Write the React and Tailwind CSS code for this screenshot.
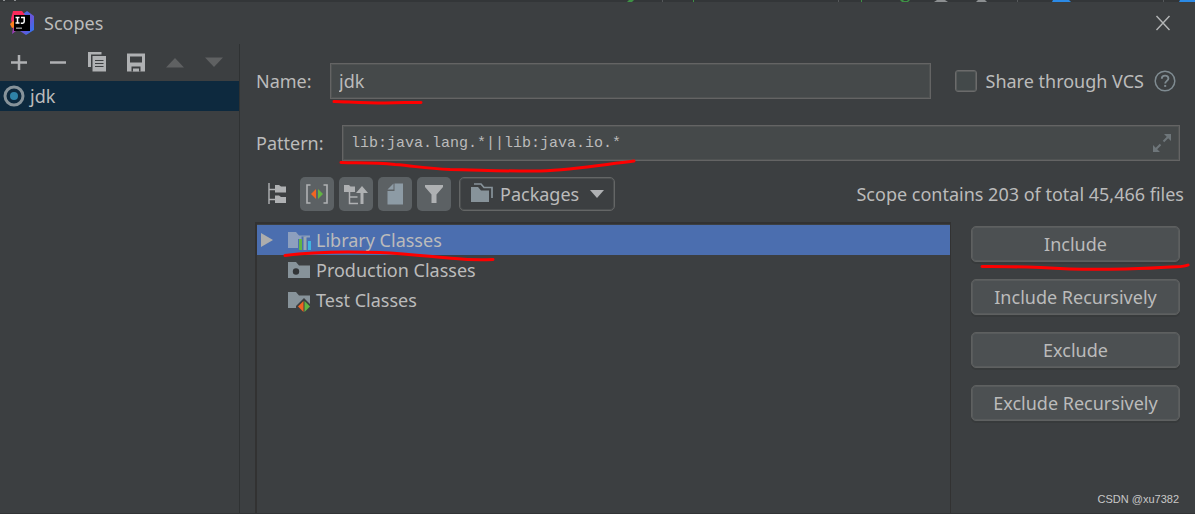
import React, { useState } from "react";

function IdeaLogo() {
  return (
    <svg className="w-6 h-6" viewBox="0 0 24 24" aria-hidden="true">
      <defs>
        <linearGradient id="ideaRight" x1="0" y1="0" x2="1" y2="1">
          <stop offset="0" stopColor="#2f7bf0" />
          <stop offset="0.55" stopColor="#6a55d8" />
          <stop offset="1" stopColor="#1f7df5" />
        </linearGradient>
        <linearGradient id="ideaLeft" x1="0" y1="0" x2="0" y2="1">
          <stop offset="0" stopColor="#fe2857" />
          <stop offset="0.5" stopColor="#f0306a" />
          <stop offset="1" stopColor="#8a3fc8" />
        </linearGradient>
      </defs>
      <path d="M13 3 17 0 24 5v14l-8 5-6-4z" fill="url(#ideaRight)" />
      <path d="M3 0h9l3 4-9 16-4 3 1-6-2-9z" fill="url(#ideaLeft)" />
      <path d="M0 13l3-3 2 1v5l-3 1z" fill="#fc801d" />
      <rect x="4" y="4" width="16" height="16" fill="#000" />
      <path d="M5.500 6.500h4M7.500 6.500v6M5.500 12h4M11 6.500h3.200v4q0 1.700-1.700 1.700H10.800" fill="none" stroke="#fff" strokeWidth="1.500" />
      <path d="M6 17.200h6" stroke="#999" strokeWidth="1.400" />
    </svg>
  );
}

const listActions = [
  {
    label: "Add",
    icon: <path d="M2 9.500h16M10 2v15" stroke="#afb1b3" strokeWidth="2.500" />,
  },
  {
    label: "Remove",
    icon: <path d="M2 9.500h16" stroke="#afb1b3" strokeWidth="2.500" />,
  },
  {
    label: "Copy",
    icon: (
      <>
        <path d="M1 -1h13.500v2.500H4V14H1z" fill="#afb1b3" />
        <path d="M5.500 3H19v15.500H5.500z" fill="#afb1b3" />
        <path d="M8 7.500h8.500M8 10.500h8.500M8 13.500h8.500" stroke="#3c3f41" strokeWidth="1.200" />
      </>
    ),
  },
  {
    label: "Save As",
    icon: (
      <>
        <path d="M1 0.500h18v18H1z" fill="#afb1b3" />
        <path d="M4 3.500h12v6H4zM5.500 13.500h9v5h-9z" fill="#3c3f41" />
        <path d="M7 15.500h6v3H7z" fill="#afb1b3" />
      </>
    ),
  },
  {
    label: "Move Up",
    disabled: true,
    icon: <path d="M1 14.500 10 5l9 9.500z" fill="#5f6162" />,
  },
  {
    label: "Move Down",
    disabled: true,
    icon: <path d="M1 4.500h18L10 14z" fill="#5f6162" />,
  },
];

const viewToggles = [
  {
    label: "Flatten Packages",
    on: false,
    icon: (
      <>
        <path d="M2 0v21M2 6.500h6M2 16.500h6" stroke="#afb1b3" strokeWidth="1.400" fill="none" />
        <path d="M8 2h4l2 1.500h5v6H8zM8 12.500h4l2 1.500h5v6H8z" fill="#afb1b3" />
      </>
    ),
  },
  {
    label: "Show Only Modules",
    on: true,
    icon: (
      <>
        <path d="M4.500 2H1v18h3.500M17.500 2H21v18h-3.500" fill="none" stroke="#afb1b3" strokeWidth="1.600" />
        <path d="M10 6v10l-5-5z" fill="#f26522" />
        <path d="M12 6v10l5-5z" fill="#62b543" />
      </>
    ),
  },
  {
    label: "Group by Scope Type",
    on: true,
    icon: (
      <>
        <path d="M-1 2h5l1.500 1.500H10V9H-1z" fill="#afb1b3" />
        <path d="M4.500 9v11.500H13M4.500 14H12.500" fill="none" stroke="#afb1b3" strokeWidth="1.500" />
        <path d="M17 3l6 7h-4.500v11h-3V10H11z" fill="#afb1b3" />
      </>
    ),
  },
  {
    label: "Show Files",
    on: true,
    icon: (
      <>
        <path d="M10.500 0.500h8.500V21.500H3.500V8h7z" fill="#8d9ba5" />
        <path d="M9.500 0.500V6.500H3.500z" fill="#8d9ba5" />
      </>
    ),
  },
  {
    label: "Filter",
    on: true,
    icon: <path d="M2 2h18v2l-6.500 7.500V20h-5v-8.500L2 4z" fill="#afb1b3" />,
  },
];

const treeItems = [
  {
    name: "Library Classes",
    expandable: true,
    icon: (
      <>
        <path d="M0 2h8l3 3.500h11V7.500h-4.500v-1h-4V9H10v9H0z" fill="#8d9fbe" />
        <path d="M11 9h3v11h-3z" fill="#62b543" />
        <path d="M15.500 6.500h3V20h-3z" fill="#9aa7b0" />
        <path d="M20 11h3v9h-3z" fill="#40b6e0" />
      </>
    ),
  },
  {
    name: "Production Classes",
    icon: (
      <>
        <path d="M0 2h8l3 3.500h11V18H0z" fill="#87939a" />
        <circle cx="8" cy="11.500" r="3.200" fill="#323537" />
      </>
    ),
  },
  {
    name: "Test Classes",
    icon: (
      <>
        <path d="M0 2h8l3 3.500h11V14l-6-6-8 8v2H0z" fill="#87939a" />
        <path d="M15.500 11v11L10 16.500z" fill="#f26522" />
        <path d="M16.500 11v11l5.500-5.500z" fill="#62b543" />
      </>
    ),
  },
];

const scopeActions = ["Include", "Include Recursively", "Exclude", "Exclude Recursively"];

// Sliver of the main IDE window that shows above the dialog
function ParentWindowEdge() {
  return (
    <div className="h-[2px] bg-[#333638] flex justify-between overflow-hidden">
      <svg width="20" height="2" className="shrink-0" aria-hidden="true">
        <path d="M3 0h2v1H3zM14 0h2v1h-2z" fill="#8c8f91" />
      </svg>
      <svg width="635" height="2" className="shrink-0" aria-hidden="true">
        <path d="M69 0h5l-2 2h-5zM133 0h1v2h-1zM301 0h1v2h-1zM340 0h3l1 1h3l1-1h2l-2 2h-6z" fill="#3d9144" />
        <path d="M102 0h1v2h-1zM278 0h1v2h-1zM457 0h1v2h-1zM603 0h1v2h-1z" fill="#55585a" />
        <path d="M377 0h8l3 2h-14zM418 0h7l2 2h-11z" fill="#8c8f91" />
        <path d="M493 0h16l2 2h-19zM620 0h15v2h-16z" fill="#2b8ae6" />
      </svg>
    </div>
  );
}

// Hand-drawn red underlines
function Annotations() {
  return (
    <svg
      className="absolute left-0 top-0 pointer-events-none"
      width="1195"
      height="514"
      fill="none"
      stroke="#fe0000"
      strokeWidth="3"
      strokeLinecap="round"
      aria-hidden="true"
    >
      <path d="M334 101.500C350 102 365 103 385 103S408 102 421 102.500" />
      <path d="M341 162.500C360 163 375 162.500 395 164.500C415 166 425 168.500 450 169.500C480 170 510 171.500 540 171C575 169.500 600 165 634 161" />
      <path d="M285 255.500C310 252 350 251.500 380 252.500C410 254 435 257 455 258.500C470 260 480 260 493 259.500" />
      <path d="M982 266.500C1010 266 1040 267.500 1070 269C1105 270 1150 268.500 1170 267C1180 266.500 1184 267 1188 265" />
    </svg>
  );
}

export default function App() {
  const [name, setName] = useState("jdk");
  const [pattern, setPattern] = useState("lib:java.lang.*||lib:java.io.*");
  const [shared, setShared] = useState(false);
  const [selected, setSelected] = useState(0);

  return (
    <div className="relative min-h-screen flex flex-col bg-[#3c3f41] text-[#bbbbbb] text-[18px] leading-6 font-['Noto_Sans',sans-serif] border-b border-[#323436]">
      <ParentWindowEdge />

      {/* Title bar */}
      <header className="h-[42px] flex items-center justify-between pl-[10px] pr-6">
        <div className="flex items-center gap-[10px]">
          <IdeaLogo />
          <h1>Scopes</h1>
        </div>
        <button type="button" aria-label="Close">
          <svg className="w-4 h-4" viewBox="0 0 16 16" fill="none" stroke="#b4b6b7" strokeWidth="1.400">
            <path d="M1.500 1 14.500 15M14.500 1 1.500 15" />
          </svg>
        </button>
      </header>

      <div className="flex-1 flex">
        {/* Scope list */}
        <aside className="w-60 shrink-0 border-r border-[#2f3233]">
          <div className="h-[37px] flex items-center gap-[19px] pl-[9px]">
            {listActions.map((action) => (
              <button key={action.label} type="button" aria-label={action.label} disabled={action.disabled}>
                <svg className="w-5 h-5 overflow-visible" viewBox="0 0 20 20" fill="none">
                  {action.icon}
                </svg>
              </button>
            ))}
          </div>
          <ul>
            <li className="h-[30px] flex items-center gap-[5px] pl-[3px] bg-[#0d293e]">
              <svg className="w-[22px] h-[22px]" viewBox="0 0 22 22" aria-hidden="true">
                <circle cx="11" cy="11" r="9" fill="none" stroke="#87939a" strokeWidth="3" />
                <circle cx="11" cy="11" r="4" fill="#2f83a8" />
              </svg>
              <span>jdk</span>
            </li>
          </ul>
        </aside>

        {/* Scope editor */}
        <main className="flex-1 min-w-0 flex flex-col pt-[19px] pl-[15px] pr-[15px]">
          <div className="flex items-center">
            <label htmlFor="scope-name" className="w-[75px] shrink-0 pl-px">Name:</label>
            <input
              id="scope-name"
              type="text"
              value={name}
              onChange={(e) => setName(e.target.value)}
              className="flex-1 min-w-0 h-9 px-2 bg-[#45494a] border border-[#646464] shadow-[inset_0_0_0_1px_#505353] outline-none"
            />
            <input
              id="share-vcs"
              type="checkbox"
              checked={shared}
              onChange={(e) => setShared(e.target.checked)}
              className="appearance-none w-[22px] h-[22px] ml-6 mr-[9px] shrink-0 rounded-[3px] bg-[#43494a] border border-[#6b6b6b] shadow-[inset_0_0_0_1px_#585b5b] checked:bg-[#6b6b6b]"
            />
            <label htmlFor="share-vcs" className="shrink-0">Share through VCS</label>
            <button type="button" aria-label="Help" className="ml-[10px] mr-1 shrink-0">
              <svg className="w-[22px] h-[22px]" viewBox="0 0 22 22" fill="none" stroke="#7f8b91">
                <circle cx="11" cy="11" r="9.800" strokeWidth="1.500" />
                <path d="M7.800 8.800c0-4.200 6.600-4.200 6.600-.2 0 2.200-3.200 2.400-3.200 4.900" strokeWidth="1.900" />
                <path d="M11.200 14.900v2" strokeWidth="2" />
              </svg>
            </button>
          </div>

          <div className="flex items-center mt-[26px]">
            <label htmlFor="scope-pattern" className="w-[87px] shrink-0 pl-px">Pattern:</label>
            <div className="relative flex-1 min-w-0">
              <input
                id="scope-pattern"
                type="text"
                value={pattern}
                onChange={(e) => setPattern(e.target.value)}
                className="w-full h-9 pl-2 pr-10 bg-[#45494a] border border-[#646464] shadow-[inset_0_0_0_1px_#505353] outline-none font-['Liberation_Mono',monospace] text-[15px]"
              />
              <button type="button" aria-label="Expand" className="absolute right-2 top-2">
                <svg className="w-5 h-5" viewBox="0 0 20 20">
                  <path d="M12 1h7v7zM1 12v7h7z" fill="#6e767a" />
                  <path d="M11.500 8.500 16 4M8.500 11.500 4 16" stroke="#6e767a" strokeWidth="2" />
                </svg>
              </button>
            </div>
          </div>

          <div className="flex items-center justify-between mt-4 -mr-1">
            <div className="flex items-center gap-[5px] pl-[6px]">
              {viewToggles.map((toggle) => (
                <button
                  key={toggle.label}
                  type="button"
                  aria-label={toggle.label}
                  aria-pressed={toggle.on}
                  className={`w-[34px] h-[34px] flex items-center justify-center rounded-[5px] ${
                    toggle.on ? "bg-[#5c6164]" : ""
                  }`}
                >
                  <svg className="w-[22px] h-[22px] overflow-visible" viewBox="0 0 22 22">
                    {toggle.icon}
                  </svg>
                </button>
              ))}
              <div className="relative ml-[3px]">
                <select
                  aria-label="View"
                  className="appearance-none block w-[156px] h-[34px] pl-10 pr-8 rounded-[5px] bg-transparent border border-[#646666] shadow-[inset_0_0_0_1px_#4c4f50] outline-none"
                >
                  <option>Packages</option>
                </select>
                <svg className="absolute left-3 top-[6px] pointer-events-none" width="22" height="20" aria-hidden="true">
                  <path d="M0 4h7l3 3.500h8V19H0z" fill="#87939a" />
                  <path d="M3 1h7l3 3.500h8V15" fill="none" stroke="#87939a" strokeWidth="1.700" />
                </svg>
                <svg className="absolute right-[11px] top-[13px] pointer-events-none" width="14" height="8" aria-hidden="true">
                  <path d="M0 0h14L7 8z" fill="#afb1b3" />
                </svg>
              </div>
            </div>
            <span>Scope contains 203 of total 45,466 files</span>
          </div>

          <div className="flex-1 flex gap-5 mt-[11px]">
            <ul role="tree" className="flex-1 min-w-0 border-t-2 border-l-2 border-r border-[#323232] pt-px">
              {treeItems.map((item, i) => (
                <li
                  key={item.name}
                  role="treeitem"
                  aria-selected={selected === i}
                  onClick={() => setSelected(i)}
                  className={`h-[30px] flex items-center pl-1 ${selected === i ? "bg-[#4b6eaf]" : ""}`}
                >
                  <svg className="w-3 h-[14px] mr-[15px]" viewBox="0 0 12 14" aria-hidden="true">
                    {item.expandable && <path d="M0 0v14l12-7z" fill="#adadad" />}
                  </svg>
                  <svg className="w-6 h-5 mr-1 overflow-visible" viewBox="0 0 24 20" aria-hidden="true">
                    {item.icon}
                  </svg>
                  <span>{item.name}</span>
                </li>
              ))}
            </ul>
            <div className="w-[209px] shrink-0 flex flex-col gap-[17px] pt-1">
              {scopeActions.map((label) => (
                <button
                  key={label}
                  type="button"
                  className="h-9 rounded-[5px] bg-[#4c5052] border border-[#5e6060] shadow-[inset_0_0_0_1px_#585b5c,0_2px_0_#373a3b]"
                >
                  {label}
                </button>
              ))}
            </div>
          </div>
        </main>
      </div>

      <Annotations />
      <span className="absolute right-4 bottom-2 text-[11px] leading-3 text-[#c8c8c8] font-['Liberation_Sans',sans-serif]">
        CSDN @xu7382
      </span>
    </div>
  );
}
